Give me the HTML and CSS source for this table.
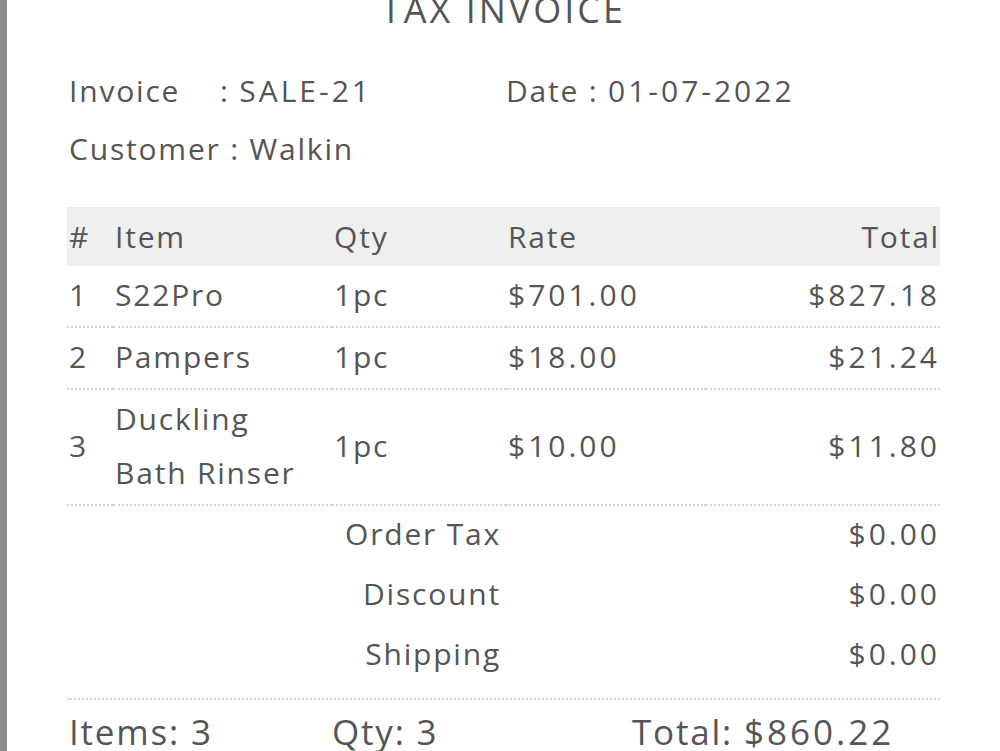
FILE: index.html
```html
<!DOCTYPE html>
<html lang="en">
<head>
<meta charset="utf-8">
<title>Tax Invoice</title>
<link rel="stylesheet" href="styles.css">
</head>
<body>
<div class="page">
  <div class="side-bar"></div>
  <main class="receipt">
    <h1 class="title">TAX INVOICE</h1>
    <div class="info">
      <div class="info-row">
        <span class="info-label">Invoice</span>
        <span class="info-value">: <span class="num">SALE-21</span></span>
        <span class="info-date">Date : <span class="num">01-07-2022</span></span>
      </div>
      <div class="info-row">Customer : Walkin</div>
    </div>

    <table class="items">
      <colgroup>
        <col class="c-num"><col class="c-item"><col class="c-qty"><col class="c-rate"><col class="c-total">
      </colgroup>
      <thead>
        <tr>
          <th>#</th><th>Item</th><th>Qty</th><th>Rate</th><th class="right">Total</th>
        </tr>
      </thead>
      <tbody>
        <tr>
          <td class="num">1</td><td>S22Pro</td><td>1pc</td><td class="num">$701.00</td><td class="right num">$827.18</td>
        </tr>
        <tr>
          <td class="num">2</td><td>Pampers</td><td>1pc</td><td class="num">$18.00</td><td class="right num">$21.24</td>
        </tr>
        <tr>
          <td class="num">3</td><td>Duckling<br>Bath Rinser</td><td>1pc</td><td class="num">$10.00</td><td class="right num">$11.80</td>
        </tr>
      </tbody>
    </table>

    <div class="summary">
      <div class="sum-row"><span class="sum-label">Order Tax</span><span class="sum-value num">$0.00</span></div>
      <div class="sum-row"><span class="sum-label">Discount</span><span class="sum-value num">$0.00</span></div>
      <div class="sum-row"><span class="sum-label">Shipping</span><span class="sum-value num">$0.00</span></div>
    </div>

    <div class="footer">
      <span>Items: <span class="num">3</span></span>
      <span>Qty: <span class="num">3</span></span>
      <span>Total: <span class="num">$860.22</span></span>
    </div>
  </main>
</div>
</body>
</html>
```

FILE: styles.css
```css
html, body {
  margin: 0;
  padding: 0;
  background: #ffffff;
  overflow: hidden;
}

body {
  font-family: "Open Sans", "Lato", sans-serif;
  color: #555555;
  font-size: 30px;
  letter-spacing: 1.8px;
}

.num {
  letter-spacing: 3px;
}

.page {
  display: flex;
  min-height: 751px;
}

.side-bar {
  width: 7px;
  flex: 0 0 7px;
  background: #8c8c8c;
}

.receipt {
  width: 873px;
  margin-left: 60px;
  margin-top: -17px;
}

.title {
  margin: 0;
  font-size: 36px;
  font-weight: 400;
  letter-spacing: 3px;
  line-height: 54px;
  text-align: center;
  color: #555;
}

.info {
  margin-top: 25px;
  padding-left: 2px;
}

.info-row {
  display: flex;
  line-height: 58px;
}

.info-label {
  width: 151px;
}

.info-value {
  width: 286px;
}

.items {
  width: 873px;
  border-collapse: collapse;
  table-layout: fixed;
  margin-top: 29px;
}

.c-num { width: 46px; }
.c-item { width: 219px; }
.c-qty { width: 174px; }
.c-rate { width: 200px; }

.items th {
  background: #efefef;
  font-weight: 400;
  text-align: left;
  height: 59px;
  padding: 0 0 0 2px;
  line-height: 54px;
}

.items td {
  padding: 2px 0 4px 2px;
  line-height: 54px;
  border-bottom: 2px dotted #d6d6d6;
  vertical-align: middle;
}

.items .right {
  text-align: right;
  padding-right: 0;
}

.summary {
  margin-top: -2px;
  padding-bottom: 14px;
  border-bottom: 2px dotted #d6d6d6;
}

.sum-row {
  display: flex;
  line-height: 60px;
}

.sum-label {
  width: 434px;
  text-align: right;
}

.sum-value {
  flex: 1;
  text-align: right;
}

.footer {
  display: grid;
  grid-template-columns: 263px 300px 1fr;
  padding-left: 2px;
  font-size: 35px;
  line-height: 63px;
}
```
